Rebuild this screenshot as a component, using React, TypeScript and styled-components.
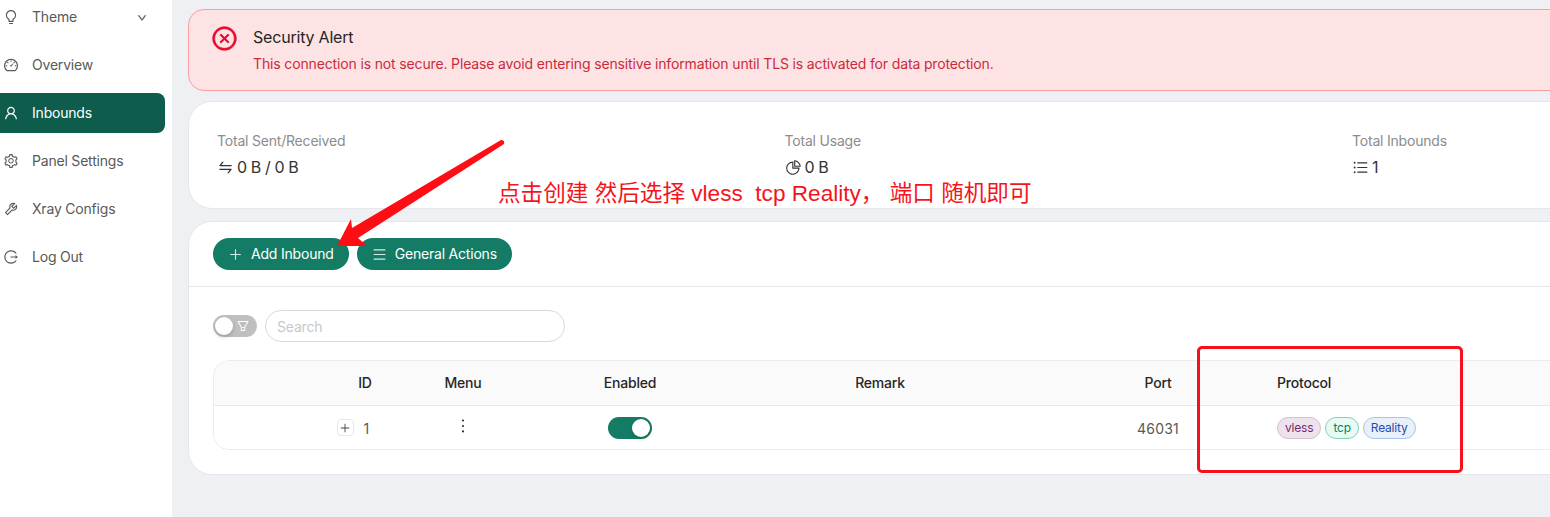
import React from "react";
import styled, { createGlobalStyle } from "styled-components";
import {
  AiOutlineBars,
  AiOutlineBulb,
  AiOutlineCloseCircle,
  AiOutlineDashboard,
  AiOutlineDown,
  AiOutlineFilter,
  AiOutlineLogout,
  AiOutlineMenu,
  AiOutlineMore,
  AiOutlinePieChart,
  AiOutlinePlus,
  AiOutlineSetting,
  AiOutlineSwap,
  AiOutlineTool,
  AiOutlineUser,
} from "react-icons/ai";

const GlobalStyle = createGlobalStyle`
  html, body {
    margin: 0;
    height: 517px;
    overflow: hidden;
    background: #eef0f4;
    font-family: Inter, "Liberation Sans", sans-serif;
    font-size: 14px;
    letter-spacing: -0.2px;
  }
`;

const Page = styled.div`
  position: relative;
  display: flex;
  width: 1550px;
  height: 517px;
  overflow: hidden;
`;

const Sidebar = styled.nav`
  flex: none;
  width: 172px;
  background: #fff;
  display: flex;
  flex-direction: column;
  gap: 8px;
  margin-top: -3px;
  padding-right: 7px;
  box-sizing: border-box;
`;

const MenuItem = styled.div<{ $active?: boolean }>`
  display: flex;
  align-items: center;
  height: 40px;
  box-sizing: border-box;
  padding: 0 0 2px 3px;
  border-radius: 0 8px 8px 0;
  background: ${(p) => (p.$active ? "#0e5c4b" : "transparent")};
  color: ${(p) => (p.$active ? "#fff" : "#595959")};
  svg {
    flex: none;
    font-size: 16px;
    margin: 2px 13px 0 0;
  }
`;

const Chevron = styled(AiOutlineDown)`
  && {
    font-size: 10px;
    margin: 0 0 0 auto;
    position: relative;
    left: -18px;
    top: 2px;
    stroke: #595959;
    stroke-width: 60;
  }
`;

const Main = styled.main`
  flex: none;
  width: 1800px;
  padding: 9px 0 0 16px;
  display: flex;
  flex-direction: column;
  gap: 10px;
  box-sizing: border-box;
`;

const Alert = styled.div`
  display: flex;
  align-items: flex-start;
  height: 82px;
  box-sizing: border-box;
  padding: 15px 24px;
  background: #fee3e4;
  border: 1px solid #fb9ea2;
  border-radius: 16px;
  svg {
    flex: none;
    font-size: 27px;
    color: #e8062c;
    stroke: currentColor;
    stroke-width: 24;
    margin: 0 15px 0 -2px;
  }
`;

const AlertTitle = styled.div`
  font-size: 16px;
  line-height: 24px;
  color: #262626;
`;

const AlertText = styled.div`
  margin-top: 4px;
  line-height: 22px;
  letter-spacing: -0.145px;
  color: #cc2a3c;
`;

const Card = styled.section`
  background: #fff;
  border: 1px solid #e6e7eb;
  border-radius: 24px;
  box-sizing: border-box;
`;

const StatsCard = styled(Card)`
  display: flex;
  height: 108px;
  padding: 28px;
  margin-bottom: 2px;
`;

const Stat = styled.div`
  flex: none;
  width: 567.5px;
`;

const StatLabel = styled.div`
  line-height: 22px;
  color: #8c8c8c;
`;

const StatValue = styled.div`
  display: flex;
  align-items: center;
  gap: 3px;
  line-height: 30px;
  font-size: 16px;
  letter-spacing: -0.4px;
  color: #333;
  svg {
    font-size: 17px;
  }
`;

const CardHead = styled.div`
  display: flex;
  gap: 8px;
  padding: 16px 24px;
  border-bottom: 1px solid #e8e8e8;
`;

const PillButton = styled.button`
  display: flex;
  align-items: center;
  gap: 8px;
  height: 32px;
  padding: 0 15px 2px;
  border: 0;
  border-radius: 16px;
  background: #147c65;
  color: #fff;
  font: inherit;
  letter-spacing: inherit;
  svg {
    font-size: 15px;
    margin-top: 2px;
    color: #d5ebe5;
  }
`;

const CardBody = styled.div`
  padding: 23px 24px 24px;
`;

const FilterRow = styled.div`
  display: flex;
  align-items: center;
  gap: 8px;
  margin-bottom: 18px;
`;

const Toggle = styled.span<{ $on?: boolean }>`
  position: relative;
  display: inline-flex;
  align-items: center;
  justify-content: ${(p) => (p.$on ? "flex-start" : "flex-end")};
  width: 44px;
  height: 22px;
  padding: 0 7px;
  box-sizing: border-box;
  border-radius: 11px;
  background: ${(p) => (p.$on ? "#147c65" : "#bfbfbf")};
  color: #fff;
  font-size: 14px;
  &::after {
    content: "";
    position: absolute;
    top: 2px;
    left: ${(p) => (p.$on ? "24px" : "2px")};
    width: 18px;
    height: 18px;
    border-radius: 50%;
    background: #fff;
    box-shadow: 0 2px 4px rgba(0, 35, 11, 0.2);
  }
`;

const SearchBox = styled.input`
  width: 300px;
  height: 32px;
  box-sizing: border-box;
  padding: 0 11px;
  border: 1px solid #d9d9d9;
  border-radius: 16px;
  font: inherit;
  letter-spacing: inherit;
  outline: none;
  &::placeholder {
    color: #c8c8c8;
  }
`;

const Table = styled.div`
  border: 1px solid #ececec;
  border-radius: 16px;
  overflow: hidden;
`;

const TableRow = styled.div<{ $head?: boolean }>`
  display: grid;
  grid-template-columns: 204px 90px 244px 356px 100px 1fr;
  align-items: center;
  height: ${(p) => (p.$head ? "44px" : "43px")};
  background: ${(p) => (p.$head ? "#fafafa" : "#fff")};
  border-bottom: ${(p) => (p.$head ? "1px solid #e8e8e8" : "0")};
  color: ${(p) => (p.$head ? "#262626" : "#595959")};
  font-weight: ${(p) => (p.$head ? 450 : 400)};
`;

const HeadLabel = styled.span`
  margin-bottom: 2px;
`;

const IdCell = styled.div`
  display: flex;
  align-items: center;
  justify-content: center;
  gap: 10px;
  padding-left: 98px;
  box-sizing: border-box;
`;

const ExpandBox = styled.span`
  display: inline-flex;
  align-items: center;
  justify-content: center;
  width: 15px;
  height: 15px;
  margin-left: -24px;
  border: 1px solid #e8e8e8;
  border-radius: 4px;
  color: #444;
  font-size: 12px;
`;

const Cell = styled.div`
  display: flex;
  align-items: center;
  justify-content: center;
`;

const RemarkCell = styled(Cell)`
  padding-right: 100px;
`;

const MoreIcon = styled(AiOutlineMore)`
  font-size: 20px;
  color: #333;
  margin-top: -4px;
`;

const NumberText = styled.span`
  margin-top: 1px;
  letter-spacing: 0.2px;
`;

const ProtocolCell = styled.div`
  display: flex;
  gap: 4px;
  padding-left: 69px;
`;

const Tag = styled.span<{ $bg: string; $line: string; $fg: string }>`
  height: 22px;
  line-height: 20px;
  box-sizing: border-box;
  padding: 0 7px;
  border-radius: 11px;
  border: 1px solid ${(p) => p.$line};
  background: ${(p) => p.$bg};
  color: ${(p) => p.$fg};
  font-size: 12px;
`;

const Arrow = styled.svg`
  position: absolute;
  inset: 0;
  pointer-events: none;
`;

const Note = styled.div`
  position: absolute;
  left: 498px;
  top: 180px;
  line-height: 28px;
  white-space: pre;
  color: #f5141c;
  font-family: "Liberation Sans", "Noto Sans CJK SC", sans-serif;
  font-size: 22.6px;
  letter-spacing: 0;
`;

const RedBox = styled.div`
  position: absolute;
  left: 1197px;
  top: 346px;
  width: 266px;
  height: 127px;
  box-sizing: border-box;
  border: 3px solid #f5101e;
  border-radius: 5px;
`;

const menu = [
  { label: "Overview", icon: <AiOutlineDashboard /> },
  { label: "Inbounds", icon: <AiOutlineUser />, active: true },
  { label: "Panel Settings", icon: <AiOutlineSetting /> },
  { label: "Xray Configs", icon: <AiOutlineTool /> },
  { label: "Log Out", icon: <AiOutlineLogout /> },
];

export default function App() {
  return (
    <Page>
      <GlobalStyle />
      <Sidebar>
        <MenuItem>
          <AiOutlineBulb />
          Theme
          <Chevron />
        </MenuItem>
        {menu.map((item) => (
          <MenuItem key={item.label} $active={item.active}>
            {item.icon}
            {item.label}
          </MenuItem>
        ))}
      </Sidebar>

      <Main>
        <Alert>
          <AiOutlineCloseCircle />
          <div>
            <AlertTitle>Security Alert</AlertTitle>
            <AlertText>
              This connection is not secure. Please avoid entering sensitive
              information until TLS is activated for data protection.
            </AlertText>
          </div>
        </Alert>

        <StatsCard>
          <Stat>
            <StatLabel>Total Sent/Received</StatLabel>
            <StatValue>
              <AiOutlineSwap />0 B / 0 B
            </StatValue>
          </Stat>
          <Stat>
            <StatLabel>Total Usage</StatLabel>
            <StatValue>
              <AiOutlinePieChart />0 B
            </StatValue>
          </Stat>
          <Stat>
            <StatLabel>Total Inbounds</StatLabel>
            <StatValue>
              <AiOutlineBars />1
            </StatValue>
          </Stat>
        </StatsCard>

        <Card>
          <CardHead>
            <PillButton>
              <AiOutlinePlus />
              Add Inbound
            </PillButton>
            <PillButton>
              <AiOutlineMenu />
              General Actions
            </PillButton>
          </CardHead>
          <CardBody>
            <FilterRow>
              <Toggle>
                <AiOutlineFilter />
              </Toggle>
              <SearchBox placeholder="Search" readOnly />
            </FilterRow>
            <Table>
              <TableRow $head>
                <IdCell>
                  <HeadLabel>ID</HeadLabel>
                </IdCell>
                <Cell>
                  <HeadLabel>Menu</HeadLabel>
                </Cell>
                <Cell>
                  <HeadLabel>Enabled</HeadLabel>
                </Cell>
                <RemarkCell>
                  <HeadLabel>Remark</HeadLabel>
                </RemarkCell>
                <Cell>
                  <HeadLabel>Port</HeadLabel>
                </Cell>
                <ProtocolCell>
                  <HeadLabel>Protocol</HeadLabel>
                </ProtocolCell>
              </TableRow>
              <TableRow>
                <IdCell>
                  <ExpandBox>
                    <AiOutlinePlus />
                  </ExpandBox>
                  <NumberText>1</NumberText>
                </IdCell>
                <Cell>
                  <MoreIcon />
                </Cell>
                <Cell>
                  <Toggle $on />
                </Cell>
                <RemarkCell />
                <Cell>
                  <NumberText>46031</NumberText>
                </Cell>
                <ProtocolCell>
                  <Tag $bg="#eee3ec" $line="#d8bcd2" $fg="#7a2a70">
                    vless
                  </Tag>
                  <Tag $bg="#e6fbf4" $line="#84d0b4" $fg="#0f7e5e">
                    tcp
                  </Tag>
                  <Tag $bg="#e8f0fa" $line="#a8c4ea" $fg="#2a4bb0">
                    Reality
                  </Tag>
                </ProtocolCell>
              </TableRow>
            </Table>
          </CardBody>
        </Card>
      </Main>

      <Note>点击创建 然后选择 vless  tcp Reality， 端口 随机即可</Note>
      <RedBox />
      <Arrow width="1550" height="517" viewBox="0 0 1550 517">
        <path
          d="M501 140 L352 228 L351 219 L337 246 L367 246 L358 238 L504 144 Q505 140 501 140 Z"
          fill="#fe0e14"
        />
      </Arrow>
    </Page>
  );
}
